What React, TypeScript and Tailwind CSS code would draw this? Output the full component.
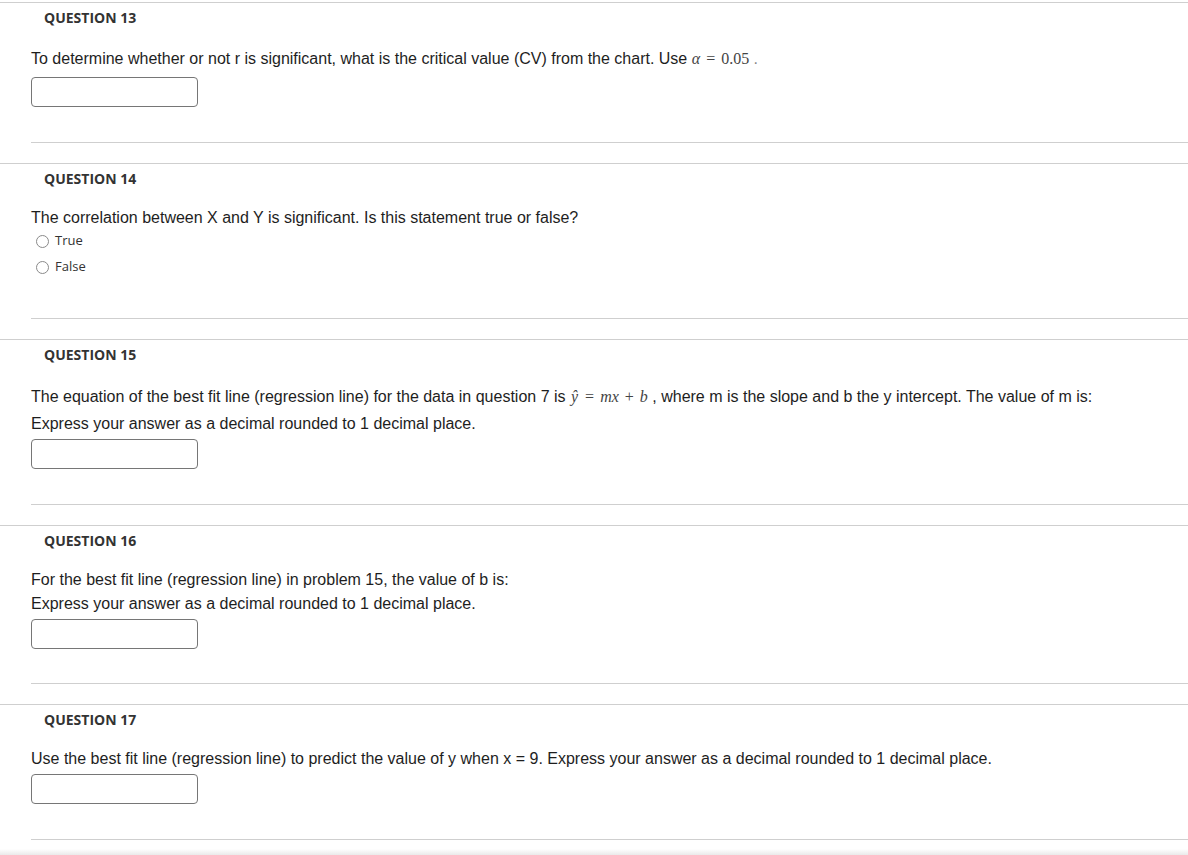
import React from 'react';

const sans = { fontFamily: '"Liberation Sans", Arial, sans-serif' };

const Header = ({ n }: { n: number }) => (
  <div
    className="pl-[44px] pt-[6px] text-[14px] leading-[18px] font-bold text-[#333]"
    style={{ fontFamily: '"Open Sans", sans-serif' }}
  >
    QUESTION {n}
  </div>
);

const Answer = () => (
  <div className="mt-[3px] ml-[31px] h-[30px] w-[167px] rounded-[4px] border border-[#767676] bg-white" />
);

const Math = ({ children }: { children: React.ReactNode }) => (
  <span className="text-[16px] text-[#444]" style={{ fontFamily: '"Liberation Serif", "DejaVu Serif", serif' }}>
    {children}
  </span>
);

const Op = ({ children }: { children: React.ReactNode }) => <span className="mx-[6px]">{children}</span>;

const Divider = ({ gap }: { gap: string }) => (
  <div className={`${gap} ml-[31px] border-t border-[#cfcfcf]`} />
);

const Radio = ({ label }: { label: string }) => (
  <label className="flex h-[22px] items-center pl-[36px]">
    <span className="h-[13px] w-[13px] rounded-full border border-[#8a8a8a] bg-white" />
    <span className="ml-[6px] text-[13px] text-[#333]" style={{ fontFamily: '"Open Sans", sans-serif' }}>
      {label}
    </span>
  </label>
);

const Question = ({
  n,
  children,
  last,
  gap = 'mt-[18px]',
}: {
  n: number;
  children: React.ReactNode;
  last?: boolean;
  gap?: string;
}) => (
  <div className={`border-t border-[#cfcfcf] ${last ? '' : 'pb-[20px]'}`}>
    <Header n={n} />
    <div className={gap}>{children}</div>
  </div>
);

export default function App() {
  return (
    <div className="min-h-[855px] w-[1188px] bg-white pt-[2px] text-[16px] text-[#1e1e1e]" style={sans}>
      <Question n={13} gap="mt-[17px]">
        <div className="pl-[31px] leading-[30px]">
          To determine whether or not r is significant, what is the critical value (CV) from the chart. Use{' '}
          <Math>
            <i>α</i>
            <Op>=</Op>0.05
          </Math>{' '}
          <span className="text-[#888]">.</span>
        </div>
        <Answer />
        <Divider gap="mt-[35px]" />
      </Question>

      <Question n={14}>
        <div className="pl-[31px] leading-[24px]">
          The correlation between X and Y is significant. Is this statement true or false?
        </div>
        <div className="flex flex-col gap-[4px]">
          <Radio label="True" />
          <Radio label="False" />
        </div>
        <Divider gap="mt-[40px]" />
      </Question>

      <Question n={15} gap="mt-[17px]">
        <div className="pl-[31px] leading-[31px]">
          The equation of the best fit line (regression line) for the data in question 7 is{' '}
          <Math>
            <i className="px-[1px]">ŷ</i>
            <Op>=</Op>
            <i>mx</i>
            <Op>+</Op>
            <i>b</i>
          </Math>{' '}
          , where m is the slope and b the y intercept. The value of m is:
        </div>
        <div className="pl-[31px] leading-[24px]">Express your answer as a decimal rounded to 1 decimal place.</div>
        <Answer />
        <Divider gap="mt-[35px]" />
      </Question>

      <Question n={16}>
        <div className="pl-[31px] leading-[24px]">
          For the best fit line (regression line) in problem 15, the value of b is:
        </div>
        <div className="pl-[31px] leading-[24px]">Express your answer as a decimal rounded to 1 decimal place.</div>
        <Answer />
        <Divider gap="mt-[34px]" />
      </Question>

      <Question n={17} last>
        <div className="pl-[31px] leading-[24px]">
          Use the best fit line (regression line) to predict the value of y when x = 9. Express your answer as a
          decimal rounded to 1 decimal place.
        </div>
        <Answer />
        <Divider gap="mt-[35px]" />
      </Question>

      <div className="mt-[9px] h-[7px] bg-gradient-to-b from-white to-[#e6e6e6]" />
    </div>
  );
}
